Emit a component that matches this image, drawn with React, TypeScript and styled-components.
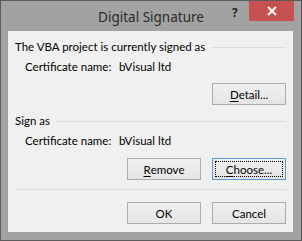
import React from "react";
import styled, { createGlobalStyle } from "styled-components";

const Global = createGlobalStyle`
  html, body { margin: 0; padding: 0; background: #a0a0a0; }
  * { box-sizing: border-box; }
`;

const Window = styled.div`
  width: 302px;
  height: 241px;
  border: 1px solid #5c5c5c;
  background: #a2a2a2;
  display: flex;
  flex-direction: column;
  font-family: "Lato", "Noto Sans", sans-serif;
  white-space: nowrap;
`;

const TitleBar = styled.div`
  height: 30px;
  position: relative;
  display: flex;
  justify-content: center;
  align-items: flex-start;
`;

const Title = styled.div`
  font-family: "Noto Sans", sans-serif;
  font-size: 13.5px;
  color: #2b2b2b;
  margin-top: 6px;
  line-height: 20px;
`;

const Help = styled.div`
  position: absolute;
  left: 231px;
  top: 3px;
  font-family: "Noto Sans", sans-serif;
  font-size: 12px;
  font-weight: bold;
  color: #222;
`;

const Close = styled.div`
  position: absolute;
  left: 248px;
  top: 0;
  width: 45px;
  height: 20px;
  background: #c75050;
  display: flex;
  align-items: center;
  justify-content: center;
`;

const Client = styled.div`
  margin: 0 8px 8px 7px;
  flex: 1;
  background: #f0f0f0;
  padding: 0 7px 8px 7px;
  display: flex;
  flex-direction: column;
  font-size: 11.5px;
  color: #000;
`;

const GroupHeader = styled.div<{ $top: number }>`
  display: flex;
  align-items: center;
  gap: 6px;
  margin-top: ${(p) => p.$top}px;
  height: 16px;
  line-height: 16px;
  &::after {
    content: "";
    flex: 1;
    height: 1px;
    background: #dcdcdc;
  }
`;

const CertRow = styled.div`
  display: flex;
  margin-top: 4px;
  padding-left: 10px;
  height: 16px;
  line-height: 16px;
`;

const CertLabel = styled.span`
  width: 94px;
  flex: none;
`;

const ButtonRow = styled.div<{ $top: number }>`
  display: flex;
  justify-content: flex-end;
  gap: 11px;
  margin-top: ${(p) => p.$top}px;
`;

const Button = styled.div<{ $focused?: boolean }>`
  width: 74px;
  height: 22px;
  border: 1px solid ${(p) => (p.$focused ? "#5a9ad6" : "#acacac")};
  background: linear-gradient(#f0f0f0, #e5e5e5);
  display: flex;
  align-items: center;
  justify-content: center;
  padding: 2px;
  color: #000;
`;

const Focus = styled.div<{ $focused?: boolean }>`
  width: 100%;
  height: 100%;
  display: flex;
  align-items: center;
  justify-content: center;
  outline: ${(p) => (p.$focused ? "1px dotted #000" : "none")};
  outline-offset: -1px;
`;

const Separator = styled.div`
  height: 1px;
  background: #dcdcdc;
  margin-top: 9px;
`;

const Mnemonic = styled.span`
  text-decoration: underline;
  text-underline-offset: 2px;
`;

export default function App() {
  return (
    <>
      <Global />
      <Window>
        <TitleBar>
          <Title>Digital Signature</Title>
          <Help>?</Help>
          <Close>
            <svg width="10" height="10" viewBox="0 0 10 10">
              <path d="M1 1 L9 9 M9 1 L1 9" stroke="#fff" strokeWidth="2" />
            </svg>
          </Close>
        </TitleBar>
        <Client>
          <GroupHeader $top={8}>The VBA project is currently signed as</GroupHeader>
          <CertRow>
            <CertLabel>Certificate name:</CertLabel>
            <span>bVisual ltd</span>
          </CertRow>
          <ButtonRow $top={8}>
            <Button>
              <Focus>
                <Mnemonic>D</Mnemonic>etail...
              </Focus>
            </Button>
          </ButtonRow>
          <GroupHeader $top={8}>Sign as</GroupHeader>
          <CertRow>
            <CertLabel>Certificate name:</CertLabel>
            <span>bVisual ltd</span>
          </CertRow>
          <ButtonRow $top={9}>
            <Button>
              <Focus>
                <Mnemonic>R</Mnemonic>emove
              </Focus>
            </Button>
            <Button $focused>
              <Focus $focused>
                <Mnemonic>C</Mnemonic>hoose...
              </Focus>
            </Button>
          </ButtonRow>
          <Separator />
          <ButtonRow $top={12}>
            <Button>
              <Focus>OK</Focus>
            </Button>
            <Button>
              <Focus>Cancel</Focus>
            </Button>
          </ButtonRow>
        </Client>
      </Window>
    </>
  );
}
